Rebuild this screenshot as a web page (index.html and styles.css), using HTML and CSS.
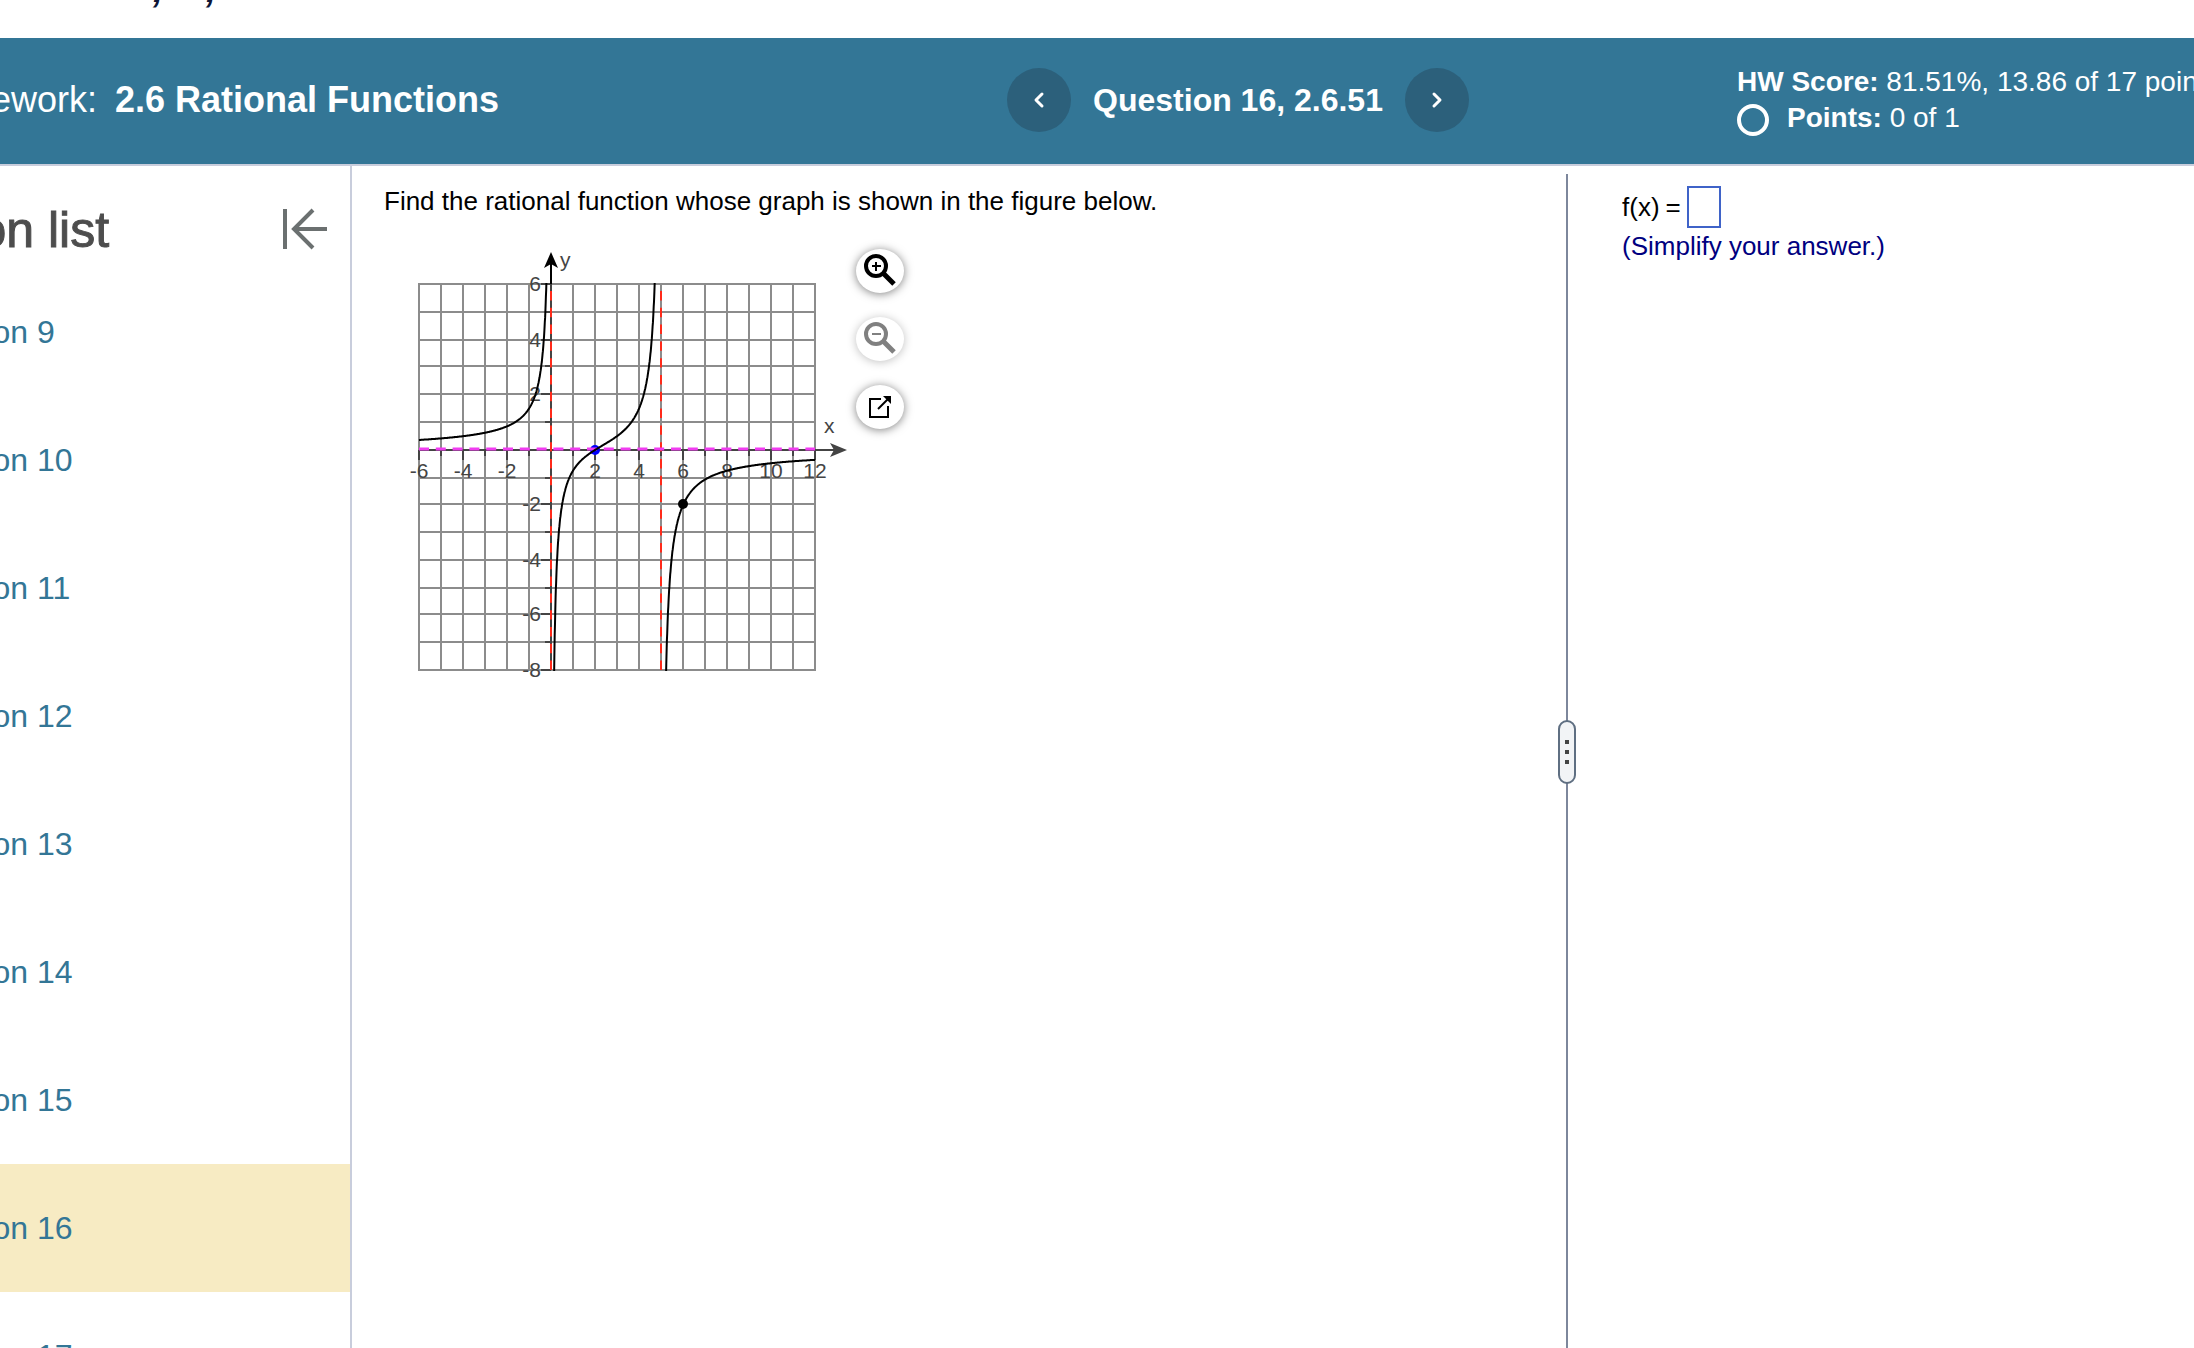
FILE: index.html
```html
<!DOCTYPE html>
<html lang="en">
<head>
<meta charset="utf-8">
<title>2.6 Rational Functions</title>
<link rel="stylesheet" href="styles.css">
</head>
<body>
<div class="shell">
  <div class="course-bar"><span>,</span><span>,</span></div>

  <header class="header">
    <h1 class="assignment"><span class="assignment-kind">Homework:</span><strong>2.6 Rational Functions</strong></h1>
    <nav class="pager" aria-label="Question navigation">
      <button class="pager-button" type="button" aria-label="Previous question">
        <svg width="12" height="18" viewBox="0 0 12 18"><path d="M9 3L3 9l6 6" fill="none" stroke="#fff" stroke-width="3" stroke-linecap="round" stroke-linejoin="round"/></svg>
      </button>
      <h2 class="pager-title">Question 16, 2.6.51</h2>
      <button class="pager-button" type="button" aria-label="Next question">
        <svg width="12" height="18" viewBox="0 0 12 18"><path d="M3 3l6 6-6 6" fill="none" stroke="#fff" stroke-width="3" stroke-linecap="round" stroke-linejoin="round"/></svg>
      </button>
    </nav>
    <div class="score">
      <p class="score-line"><b>HW Score:</b> 81.51%, 13.86 of 17 points</p>
      <p class="score-line score-points"><span class="score-ring"></span><span><b>Points:</b> 0 of 1</span></p>
    </div>
  </header>

  <div class="workspace">
    <aside class="sidebar">
      <div class="sidebar-head">
        <h2 class="sidebar-title">Question list</h2>
        <button class="collapse" type="button" aria-label="Collapse question list">
          <svg width="46" height="42" viewBox="0 0 46 42"><path d="M3 1v40M45 21H12M31 2L12 21l19 19" fill="none" stroke="#6b7070" stroke-width="4"/></svg>
        </button>
      </div>
      <ul class="questions">
        <li><a class="question" href="#q9">Question 9</a></li>
        <li><a class="question" href="#q10">Question 10</a></li>
        <li><a class="question" href="#q11">Question 11</a></li>
        <li><a class="question" href="#q12">Question 12</a></li>
        <li><a class="question" href="#q13">Question 13</a></li>
        <li><a class="question" href="#q14">Question 14</a></li>
        <li><a class="question" href="#q15">Question 15</a></li>
        <li><a class="question question-current" href="#q16" aria-current="page">Question 16</a></li>
        <li><a class="question" href="#q17">Question 17</a></li>
      </ul>
    </aside>

    <main class="problem">
      <p class="prompt">Find the rational function whose graph is shown in the figure below.</p>
      <div class="figure">
        <svg class="graph" width="450" height="440" viewBox="0 0 450 440" role="img" aria-label="Graph of a rational function">
          <clipPath id="plot-area"><path d="M18 43H416V431H18z"/></clipPath>
          <g id="grid" class="grid"></g>
          <g id="axes" class="axes"></g>
          <path class="axis-top" d="M151 20V44"/>
          <path d="M151 12l7 16-7-4-7 4z"/>
          <path class="axes" d="M19 210H434"/>
          <path d="M447 210l-17 7 4-7-4-7z" fill="#444"/>
          <g id="labels" class="labels"></g>
          <text class="labels" x="160" y="27">y</text>
          <text class="labels" x="424" y="193">x</text>
          <circle cx="195" cy="210" r="5" fill="#00f"/>
          <path class="asymptote" d="M151 430V44M261 430V44" stroke-dasharray="9.4 7.4"/>
          <path class="asymptote asymptote-horizontal" d="M19 209H415" stroke-dasharray="10 6.8"/>
          <g id="curve" class="curve" clip-path="url(#plot-area)"></g>
          <circle cx="283" cy="264" r="5"/>
        </svg>
        <div class="tools">
          <button class="tool" type="button" aria-label="Zoom in">
            <svg width="34" height="34" viewBox="0 0 34 34"><g fill="none" stroke="#000"><circle cx="13" cy="12" r="10" stroke-width="4"/><path d="M20 19l11 11" stroke-width="5"/><path d="M13 8v9M9 12h9" stroke-width="2"/></g></svg>
          </button>
          <button class="tool" type="button" aria-label="Zoom out" disabled>
            <svg width="34" height="34" viewBox="0 0 34 34"><g fill="none" stroke="#808080"><circle cx="13" cy="12" r="10" stroke-width="4"/><path d="M20 19l11 11" stroke-width="5"/><path d="M9 12h9" stroke-width="2"/></g></svg>
          </button>
          <button class="tool" type="button" aria-label="Open in new window">
            <svg width="34" height="34" viewBox="0 0 34 34"><path d="M18 9H7v18h18V16" fill="none" stroke="#000" stroke-width="2"/><path d="M15 19L25 9" stroke="#000" stroke-width="2"/><path d="M20 6h8v8z"/></svg>
          </button>
        </div>
      </div>
    </main>

    <div class="divider"><button class="divider-handle" type="button" aria-label="Resize panels"><i></i><i></i><i></i></button></div>

    <section class="answer">
      <label class="answer-row"><span>f(x)</span><span>=</span><input class="answer-box" type="text"></label>
      <p class="hint">(Simplify your answer.)</p>
    </section>
  </div>
</div>
<script src="graph.js"></script>
</body>
</html>
```
FILE: graph.js
```js
// Plots f(x) = -3(x - 2) / (x(x - 5)) on a grid of 18 by 14 units.
const NS = "http://www.w3.org/2000/svg";
const rows = [44, 72, 100, 126, 154, 182, 210, 238, 264, 292, 320, 348, 374, 402, 430];
const px = x => 151 + x * 22;
const py = y => 210 - y * 27.6;

function add(parent, name, attrs, text) {
  const el = document.createElementNS(NS, name);
  for (const key in attrs) el.setAttribute(key, attrs[key]);
  if (text !== undefined) el.textContent = text;
  document.getElementById(parent).appendChild(el);
}

let grid = "", axes = "M151 44V430";
for (let x = -6; x <= 12; x++) {
  grid += `M${px(x)} 43V431`;
  axes += `M${px(x)} 210v${x % 2 ? 6 : 10}`;
  if (x % 2 === 0 && x !== 0) add("labels", "text", { x: px(x), y: 238, "text-anchor": "middle" }, x);
}
rows.forEach((y, i) => {
  const value = 6 - i;
  grid += `M18 ${y}H416`;
  axes += `M151 ${y}h${value % 2 ? -6 : -10}`;
  if (value % 2 === 0 && value !== 0) add("labels", "text", { x: 141, y: y + 7, "text-anchor": "end" }, value);
});
add("grid", "path", { d: grid });
add("axes", "path", { d: axes });

const f = x => -3 * (x - 2) / (x * (x - 5));
for (const [from, to] of [[-6, -0.01], [0.01, 4.99], [5.01, 12]]) {
  let d = "";
  for (let x = from; x <= to + 0.001; x += 0.01) {
    const y = f(x);
    if (Math.abs(y) < 12) d += (d ? "L" : "M") + px(x).toFixed(1) + " " + py(y).toFixed(1);
  }
  add("curve", "path", { d });
}
```
FILE: styles.css
```css
* { box-sizing: border-box; }
body {
  margin: 0;
  overflow: hidden;
  background: #fff;
  color: #000;
  font-family: "Liberation Sans", Arial, Helvetica, sans-serif;
}
h1, h2, p, ul { margin: 0; padding: 0; }
button { border: 0; padding: 0; font: inherit; cursor: pointer; }

/* The shell starts left of the window, scrolled sideways. */
.shell {
  display: flex;
  flex-direction: column;
  height: 100vh;
  margin-left: -168px;
}

.course-bar {
  display: flex;
  flex: none;
  gap: 43px;
  height: 48px;
  margin-top: -10px;
  padding-left: 321px;
  color: #0d1637;
  font-size: 36px;
  font-style: italic;
  font-weight: bold;
  line-height: 0;
}

.header {
  display: flex;
  flex: none;
  align-items: center;
  height: 128px;
  padding-bottom: 2px;
  border-bottom: 2px solid #c8cddc;
  background: #337696;
  color: #fff;
  white-space: nowrap;
}
.assignment {
  display: flex;
  flex: 1;
  gap: 18px;
  padding-left: 83px;
  font-size: 36px;
  font-weight: normal;
}
.pager { display: flex; align-items: center; gap: 22px; }
.pager-button {
  display: flex;
  align-items: center;
  justify-content: center;
  width: 64px;
  height: 64px;
  border-radius: 50%;
  background: #2c607b;
}
.pager-title { width: 290px; font-size: 32px; text-align: center; }
.score {
  flex: none;
  width: 725px;
  padding-left: 268px;
  font-size: 28px;
  line-height: 36px;
}
.score-points { display: flex; gap: 18px; }
.score-ring {
  width: 32px;
  height: 32px;
  margin-top: 4px;
  border: 4px solid #fff;
  border-radius: 50%;
}

.workspace { display: flex; flex: 1; min-height: 0; }

.sidebar {
  flex: none;
  width: 520px;
  overflow: hidden;
  border-right: 2px solid #c8cddc;
}
.sidebar-head {
  display: flex;
  align-items: center;
  justify-content: space-between;
  height: 102px;
  padding: 24px 22px 0 2px;
}
.sidebar-title {
  padding-top: 2px;
  color: #4d4d4d;
  font-size: 50px;
  font-weight: normal;
  -webkit-text-stroke: 1px #4d4d4d;
}
.collapse { display: flex; background: none; }
.questions { list-style: none; }
.question {
  display: flex;
  align-items: center;
  height: 128px;
  padding-left: 68px;
  color: #337696;
  font-size: 32px;
  text-decoration: none;
}
.question-current { background: #f7ebc3; }

.problem { flex: 1; padding: 20px 32px; font-size: 26px; line-height: 30px; }
.figure { display: flex; gap: 6px; margin-top: 24px; }
.graph { display: block; margin-left: 16px; }
.grid { fill: none; stroke: #8c8c8c; stroke-width: 2; }
.axes { fill: none; stroke: #444; stroke-width: 2; }
.axis-top { stroke: #000; stroke-width: 2; }
.labels { fill: #444; font-size: 21px; }
.asymptote { stroke: #ff2a1a; stroke-width: 2; }
.asymptote-horizontal { stroke: #f03cf0; stroke-width: 3; }
.curve { fill: none; stroke: #000; stroke-width: 2; }
.tools { display: flex; flex-direction: column; gap: 24px; padding-top: 9px; }
.tool {
  display: flex;
  align-items: center;
  justify-content: center;
  width: 48px;
  height: 44px;
  border-radius: 50%;
  background: #fff;
  box-shadow: 0 1px 10px rgba(0, 0, 0, 0.5);
}
.tool:disabled { box-shadow: 0 1px 10px rgba(0, 0, 0, 0.25); }

.divider {
  display: flex;
  flex: none;
  align-items: center;
  justify-content: center;
  width: 18px;
  margin-top: 8px;
  padding-bottom: 18px;
  background: linear-gradient(#7d879c, #7d879c) center / 2px 100% no-repeat;
}
.divider-handle {
  display: flex;
  flex: none;
  flex-direction: column;
  align-items: center;
  justify-content: center;
  gap: 6px;
  width: 18px;
  height: 64px;
  border: 2px solid #5f6f82;
  border-radius: 9px;
  background: #f2f4f6;
}
.divider-handle i { width: 4px; height: 4px; background: #444; }

.answer { flex: none; width: 618px; padding: 20px 46px; font-size: 26px; line-height: 30px; }
.answer-row { display: flex; align-items: center; gap: 6px; }
.answer-box { width: 34px; height: 42px; border: 2px solid #3f63c8; background: #fff; }
.hint { margin-top: 3px; color: #000080; }
```
